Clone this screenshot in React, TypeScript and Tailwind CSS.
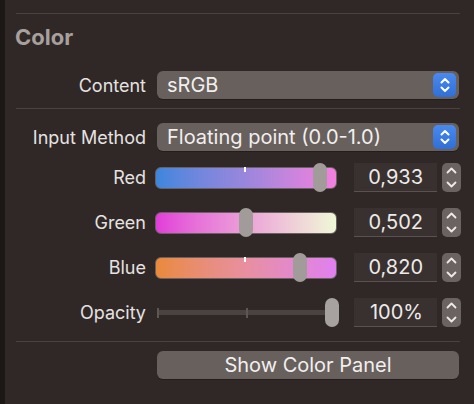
import React from "react"

const font = { fontFamily: "Inter, 'Liberation Sans', sans-serif" }

function PopupArrows() {
  return (
    <div className="w-[23px] h-[24px] rounded-[5px] bg-gradient-to-b from-[#4a8af0] to-[#2f6fd6] flex items-center justify-center">
      <svg width="12" height="18" viewBox="0 0 12 18" fill="none" stroke="#ffffff" strokeWidth="2" strokeLinecap="round" strokeLinejoin="round">
        <path d="M2.5 6.5 L6 3 L9.5 6.5" />
        <path d="M2.5 11.5 L6 15 L9.5 11.5" />
      </svg>
    </div>
  )
}

function Popup({ label, value }: { label: string; value: string }) {
  return (
    <div className="flex items-center h-[28px]">
      <div className="w-[141px] text-right text-[18px] text-[#e6e2e1]">{label}</div>
      <div className="ml-[11px] w-[302px] h-[28px] rounded-[6px] bg-[#67605d] flex items-center justify-between pl-[10px] pr-[3px] shadow-[0_1px_0_rgba(0,0,0,0.25)]">
        <span className="text-[20px] text-[#f2efee]">{value}</span>
        <PopupArrows />
      </div>
    </div>
  )
}

function Stepper() {
  return (
    <div className="w-[19px] h-[29px] rounded-[5px] bg-[#6b6361] flex items-center justify-center">
      <svg width="19" height="29" viewBox="0 0 19 29" fill="none" stroke="#eeeae9" strokeWidth="1.8" strokeLinecap="round" strokeLinejoin="round">
        <path d="M5.5 9.5 L9.5 5.5 L13.5 9.5" />
        <path d="M5.5 19.5 L9.5 23.5 L13.5 19.5" />
      </svg>
    </div>
  )
}

function ValueField({ value }: { value: string }) {
  return (
    <div className="w-[83px] h-[29px] bg-[#383130] border-b border-[#5a5250] flex items-center justify-end pr-[14px] text-[20px] text-[#eeeae9]">
      {value}
    </div>
  )
}

function ColorSlider({ label, gradient, knob, tick, value }: { label: string; gradient: string; knob: number; tick: boolean; value: string }) {
  return (
    <div className="flex items-center h-[29px]">
      <div className="w-[141px] text-right text-[18px] text-[#e6e2e1]">{label}</div>
      <div className="ml-[9px] w-[182px] h-[29px] relative flex items-center">
        <div className={"w-full h-[22px] rounded-[6px] border border-[#6a6260] " + gradient} />
        {tick && <div className="absolute left-[89px] top-[4px] w-[2px] h-[5px] bg-white" />}
        <div className="absolute top-0 w-[14px] h-[29px] rounded-full bg-[#a19c9a]" style={{ left: knob }} />
      </div>
      <div className="ml-[17px]">
        <ValueField value={value} />
      </div>
      <div className="ml-[5px]">
        <Stepper />
      </div>
    </div>
  )
}

function Divider() {
  return <div className="ml-[11px] mr-[14px] h-px bg-[#4a4240]" />
}

export default function App() {
  return (
    <div className="w-[474px] h-[404px] bg-[#2f2826] flex overflow-hidden" style={font}>
      <div className="w-[5px] h-full bg-[#1c1816]" />
      <div className="flex-1 flex flex-col">
        <div className="mt-[13px]">
          <Divider />
        </div>
        <div className="mt-[10px] pl-[10px] text-[22px] leading-[26px] font-bold text-[#a7a09e]">Color</div>

        <div className="mt-[21px]">
          <Popup label="Content" value="sRGB" />
        </div>
        <div className="mt-[9px]">
          <Divider />
        </div>
        <div className="mt-[14px]">
          <Popup label="Input Method" value="Floating point (0.0-1.0)" />
        </div>

        <div className="mt-[12px] flex flex-col gap-[16px]">
          <ColorSlider label="Red" gradient="bg-gradient-to-r from-[#3b86dd] via-[#9a86dc] to-[#f47fdf]" knob={158} tick value="0,933" />
          <ColorSlider label="Green" gradient="bg-gradient-to-r from-[#e13cd8] via-[#eba0d8] to-[#eff8d6]" knob={84} tick={false} value="0,502" />
          <ColorSlider label="Blue" gradient="bg-gradient-to-r from-[#e98a38] via-[#e88fa0] to-[#e07ff0]" knob={138} tick value="0,820" />

          <div className="flex items-center h-[29px]">
            <div className="w-[141px] text-right text-[18px] text-[#e6e2e1]">Opacity</div>
            <div className="ml-[11px] w-[182px] h-[29px] relative flex items-center">
              <div className="w-[180px] h-[5px] rounded-full bg-[#4b4341]" />
              <div className="absolute left-0 top-[10px] w-[2px] h-[10px] bg-[#5e5654]" />
              <div className="absolute left-[89px] top-[10px] w-[2px] h-[10px] bg-[#5e5654]" />
              <div className="absolute left-[168px] top-0 w-[14px] h-[29px] rounded-full bg-[#a7a2a0]" />
            </div>
            <div className="ml-[15px]">
              <ValueField value="100%" />
            </div>
            <div className="ml-[5px]">
              <Stepper />
            </div>
          </div>
        </div>

        <div className="mt-[14px]">
          <Divider />
        </div>
        <div className="mt-[9px] ml-[152px] w-[302px] h-[28px] rounded-[6px] bg-[#67605d] flex items-center justify-center text-[20px] text-[#f2efee] shadow-[0_1px_0_rgba(0,0,0,0.25)]">
          Show Color Panel
        </div>
      </div>
    </div>
  )
}
